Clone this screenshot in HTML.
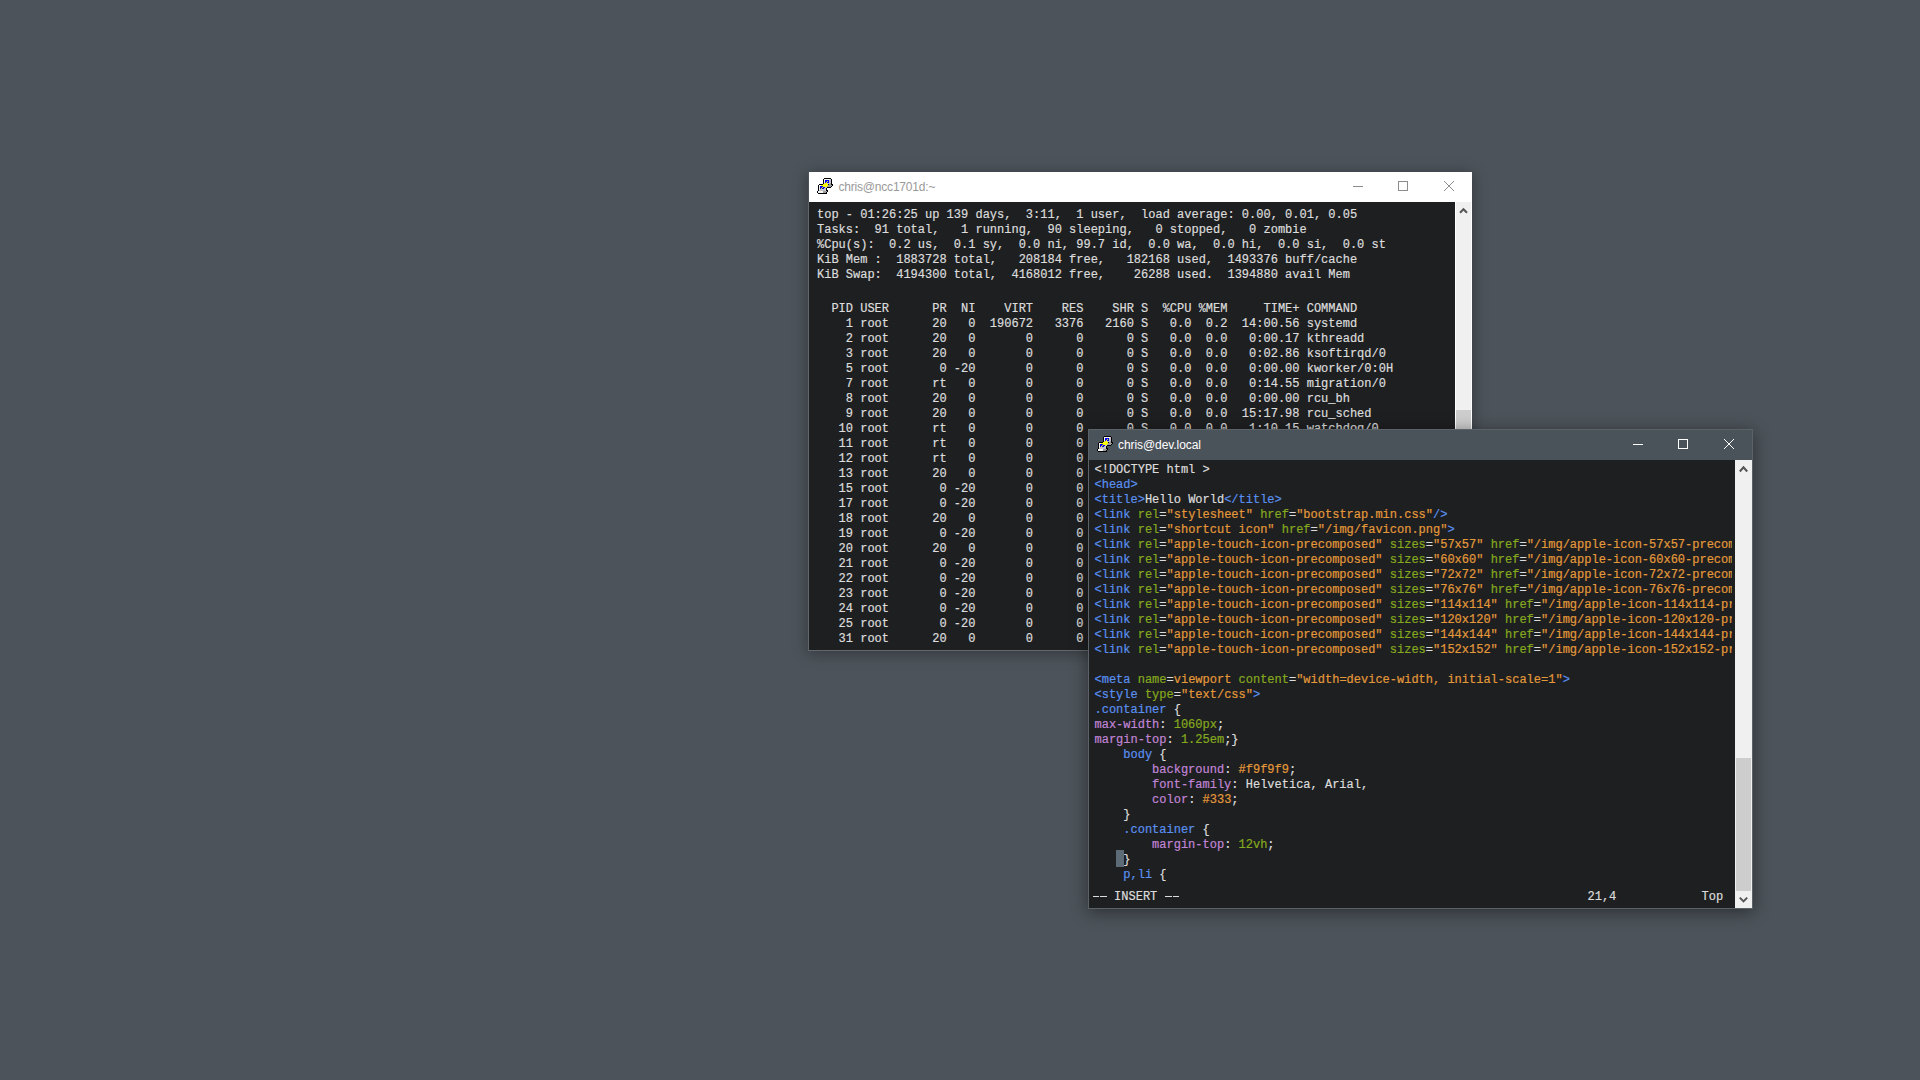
<!DOCTYPE html>
<html><head><meta charset="utf-8"><style>
html,body{margin:0;padding:0;}
body{width:1920px;height:1080px;overflow:hidden;background:#4c535a;position:relative;font-family:"Liberation Sans",sans-serif;}
.win{position:absolute;box-sizing:border-box;}
.term{position:absolute;background:#1e1f21;overflow:hidden;}
.ln{position:absolute;left:0;white-space:pre;font-family:"Liberation Mono",monospace;font-size:12px;line-height:15px;color:#dcdcdc;-webkit-text-stroke:0.2px currentColor;}
.title{position:absolute;font-size:12px;line-height:15px;white-space:pre;}
.icon{position:absolute;width:16px;height:16px;}
.sb{position:absolute;background:#f0f0f0;}
.thumb{position:absolute;background:#cdcdcd;}
</style></head><body>

<!-- window 1 -->
<div class="win" style="left:808px;top:172px;width:664px;height:479px;box-shadow:0 2px 14px rgba(0,0,0,0.35);"></div>
<div class="win" style="left:809px;top:172px;width:663px;height:478px;background:#fff;"></div>
<div class="win" style="left:808px;top:202px;width:1px;height:449px;background:#60676d;"></div>
<div class="win" style="left:808px;top:650px;width:664px;height:1px;background:#60676d;"></div>
<div class="icon" style="left:817px;top:178px"><svg width="16" height="16" viewBox="0 0 16 16" shape-rendering="crispEdges"><rect x="7" y="0" width="1" height="1" fill="#000"/><rect x="8" y="0" width="1" height="1" fill="#000"/><rect x="9" y="0" width="1" height="1" fill="#000"/><rect x="10" y="0" width="1" height="1" fill="#000"/><rect x="11" y="0" width="1" height="1" fill="#000"/><rect x="12" y="0" width="1" height="1" fill="#000"/><rect x="13" y="0" width="1" height="1" fill="#000"/><rect x="6" y="1" width="1" height="1" fill="#000"/><rect x="7" y="1" width="1" height="1" fill="#f4f4f4"/><rect x="8" y="1" width="1" height="1" fill="#f4f4f4"/><rect x="9" y="1" width="1" height="1" fill="#f4f4f4"/><rect x="10" y="1" width="1" height="1" fill="#f4f4f4"/><rect x="11" y="1" width="1" height="1" fill="#f4f4f4"/><rect x="12" y="1" width="1" height="1" fill="#f4f4f4"/><rect x="13" y="1" width="1" height="1" fill="#c4c4c4"/><rect x="14" y="1" width="1" height="1" fill="#000"/><rect x="6" y="2" width="1" height="1" fill="#000"/><rect x="7" y="2" width="1" height="1" fill="#f4f4f4"/><rect x="8" y="2" width="1" height="1" fill="#0000f8"/><rect x="9" y="2" width="1" height="1" fill="#0000f8"/><rect x="10" y="2" width="1" height="1" fill="#0000f8"/><rect x="11" y="2" width="1" height="1" fill="#0000f8"/><rect x="12" y="2" width="1" height="1" fill="#c4c4c4"/><rect x="13" y="2" width="1" height="1" fill="#c4c4c4"/><rect x="14" y="2" width="1" height="1" fill="#000"/><rect x="6" y="3" width="1" height="1" fill="#000"/><rect x="7" y="3" width="1" height="1" fill="#f4f4f4"/><rect x="8" y="3" width="1" height="1" fill="#0000f8"/><rect x="9" y="3" width="1" height="1" fill="#0000f8"/><rect x="10" y="3" width="1" height="1" fill="#ffff00"/><rect x="11" y="3" width="1" height="1" fill="#0000f8"/><rect x="12" y="3" width="1" height="1" fill="#c4c4c4"/><rect x="13" y="3" width="1" height="1" fill="#c4c4c4"/><rect x="14" y="3" width="1" height="1" fill="#000"/><rect x="6" y="4" width="1" height="1" fill="#000"/><rect x="7" y="4" width="1" height="1" fill="#f4f4f4"/><rect x="8" y="4" width="1" height="1" fill="#0000f8"/><rect x="9" y="4" width="1" height="1" fill="#ffff00"/><rect x="10" y="4" width="1" height="1" fill="#0000f8"/><rect x="11" y="4" width="1" height="1" fill="#0000f8"/><rect x="12" y="4" width="1" height="1" fill="#c4c4c4"/><rect x="13" y="4" width="1" height="1" fill="#c4c4c4"/><rect x="14" y="4" width="1" height="1" fill="#000"/><rect x="6" y="5" width="1" height="1" fill="#000"/><rect x="7" y="5" width="1" height="1" fill="#c4c4c4"/><rect x="8" y="5" width="1" height="1" fill="#ffff00"/><rect x="9" y="5" width="1" height="1" fill="#ffff00"/><rect x="10" y="5" width="1" height="1" fill="#c4c4c4"/><rect x="11" y="5" width="1" height="1" fill="#c4c4c4"/><rect x="12" y="5" width="1" height="1" fill="#c4c4c4"/><rect x="13" y="5" width="1" height="1" fill="#9c9c9c"/><rect x="14" y="5" width="1" height="1" fill="#000"/><rect x="2" y="6" width="1" height="1" fill="#000"/><rect x="3" y="6" width="1" height="1" fill="#000"/><rect x="4" y="6" width="1" height="1" fill="#000"/><rect x="5" y="6" width="1" height="1" fill="#000"/><rect x="6" y="6" width="1" height="1" fill="#ffff00"/><rect x="7" y="6" width="1" height="1" fill="#ffff00"/><rect x="8" y="6" width="1" height="1" fill="#ffff00"/><rect x="9" y="6" width="1" height="1" fill="#ffff00"/><rect x="10" y="6" width="1" height="1" fill="#ffff00"/><rect x="11" y="6" width="1" height="1" fill="#000"/><rect x="12" y="6" width="1" height="1" fill="#9c9c9c"/><rect x="13" y="6" width="1" height="1" fill="#9c9c9c"/><rect x="14" y="6" width="1" height="1" fill="#000"/><rect x="15" y="6" width="1" height="1" fill="#000"/><rect x="1" y="7" width="1" height="1" fill="#000"/><rect x="2" y="7" width="1" height="1" fill="#f4f4f4"/><rect x="3" y="7" width="1" height="1" fill="#f4f4f4"/><rect x="4" y="7" width="1" height="1" fill="#ffff00"/><rect x="5" y="7" width="1" height="1" fill="#ffff00"/><rect x="6" y="7" width="1" height="1" fill="#ffff00"/><rect x="7" y="7" width="1" height="1" fill="#ffff00"/><rect x="8" y="7" width="1" height="1" fill="#ffff00"/><rect x="9" y="7" width="1" height="1" fill="#ffff00"/><rect x="10" y="7" width="1" height="1" fill="#ffff00"/><rect x="11" y="7" width="1" height="1" fill="#9c9c9c"/><rect x="12" y="7" width="1" height="1" fill="#9c9c9c"/><rect x="13" y="7" width="1" height="1" fill="#9c9c9c"/><rect x="14" y="7" width="1" height="1" fill="#9c9c9c"/><rect x="15" y="7" width="1" height="1" fill="#000"/><rect x="1" y="8" width="1" height="1" fill="#000"/><rect x="2" y="8" width="1" height="1" fill="#f4f4f4"/><rect x="3" y="8" width="1" height="1" fill="#0000f8"/><rect x="4" y="8" width="1" height="1" fill="#0000f8"/><rect x="5" y="8" width="1" height="1" fill="#0000f8"/><rect x="6" y="8" width="1" height="1" fill="#ffff00"/><rect x="7" y="8" width="1" height="1" fill="#ffff00"/><rect x="8" y="8" width="1" height="1" fill="#ffff00"/><rect x="9" y="8" width="1" height="1" fill="#ffff00"/><rect x="10" y="8" width="1" height="1" fill="#9c9c9c"/><rect x="11" y="8" width="1" height="1" fill="#9c9c9c"/><rect x="12" y="8" width="1" height="1" fill="#9c9c9c"/><rect x="13" y="8" width="1" height="1" fill="#9c9c9c"/><rect x="14" y="8" width="1" height="1" fill="#000"/><rect x="1" y="9" width="1" height="1" fill="#000"/><rect x="2" y="9" width="1" height="1" fill="#f4f4f4"/><rect x="3" y="9" width="1" height="1" fill="#0000f8"/><rect x="4" y="9" width="1" height="1" fill="#0000f8"/><rect x="5" y="9" width="1" height="1" fill="#ffff00"/><rect x="6" y="9" width="1" height="1" fill="#0000f8"/><rect x="7" y="9" width="1" height="1" fill="#0000f8"/><rect x="8" y="9" width="1" height="1" fill="#c4c4c4"/><rect x="9" y="9" width="1" height="1" fill="#c4c4c4"/><rect x="10" y="9" width="1" height="1" fill="#000"/><rect x="11" y="9" width="1" height="1" fill="#000"/><rect x="12" y="9" width="1" height="1" fill="#000"/><rect x="13" y="9" width="1" height="1" fill="#000"/><rect x="1" y="10" width="1" height="1" fill="#000"/><rect x="2" y="10" width="1" height="1" fill="#f4f4f4"/><rect x="3" y="10" width="1" height="1" fill="#0000f8"/><rect x="4" y="10" width="1" height="1" fill="#ffff00"/><rect x="5" y="10" width="1" height="1" fill="#0000f8"/><rect x="6" y="10" width="1" height="1" fill="#0000f8"/><rect x="7" y="10" width="1" height="1" fill="#c4c4c4"/><rect x="8" y="10" width="1" height="1" fill="#c4c4c4"/><rect x="9" y="10" width="1" height="1" fill="#000"/><rect x="1" y="11" width="1" height="1" fill="#000"/><rect x="2" y="11" width="1" height="1" fill="#f4f4f4"/><rect x="3" y="11" width="1" height="1" fill="#c4c4c4"/><rect x="4" y="11" width="1" height="1" fill="#c4c4c4"/><rect x="5" y="11" width="1" height="1" fill="#c4c4c4"/><rect x="6" y="11" width="1" height="1" fill="#c4c4c4"/><rect x="7" y="11" width="1" height="1" fill="#c4c4c4"/><rect x="8" y="11" width="1" height="1" fill="#c4c4c4"/><rect x="9" y="11" width="1" height="1" fill="#000"/><rect x="1" y="12" width="1" height="1" fill="#000"/><rect x="2" y="12" width="1" height="1" fill="#c4c4c4"/><rect x="3" y="12" width="1" height="1" fill="#c4c4c4"/><rect x="4" y="12" width="1" height="1" fill="#c4c4c4"/><rect x="5" y="12" width="1" height="1" fill="#c4c4c4"/><rect x="6" y="12" width="1" height="1" fill="#c4c4c4"/><rect x="7" y="12" width="1" height="1" fill="#c4c4c4"/><rect x="8" y="12" width="1" height="1" fill="#c4c4c4"/><rect x="9" y="12" width="1" height="1" fill="#000"/><rect x="10" y="12" width="1" height="1" fill="#000"/><rect x="0" y="13" width="1" height="1" fill="#000"/><rect x="1" y="13" width="1" height="1" fill="#f4f4f4"/><rect x="2" y="13" width="1" height="1" fill="#f4f4f4"/><rect x="3" y="13" width="1" height="1" fill="#f4f4f4"/><rect x="4" y="13" width="1" height="1" fill="#f4f4f4"/><rect x="5" y="13" width="1" height="1" fill="#f4f4f4"/><rect x="6" y="13" width="1" height="1" fill="#9c9c9c"/><rect x="7" y="13" width="1" height="1" fill="#9c9c9c"/><rect x="8" y="13" width="1" height="1" fill="#9c9c9c"/><rect x="9" y="13" width="1" height="1" fill="#9c9c9c"/><rect x="10" y="13" width="1" height="1" fill="#000"/><rect x="0" y="14" width="1" height="1" fill="#000"/><rect x="1" y="14" width="1" height="1" fill="#f4f4f4"/><rect x="2" y="14" width="1" height="1" fill="#f4f4f4"/><rect x="3" y="14" width="1" height="1" fill="#f4f4f4"/><rect x="4" y="14" width="1" height="1" fill="#f4f4f4"/><rect x="5" y="14" width="1" height="1" fill="#f4f4f4"/><rect x="6" y="14" width="1" height="1" fill="#9c9c9c"/><rect x="7" y="14" width="1" height="1" fill="#9c9c9c"/><rect x="8" y="14" width="1" height="1" fill="#9c9c9c"/><rect x="9" y="14" width="1" height="1" fill="#000"/><rect x="1" y="15" width="1" height="1" fill="#000"/><rect x="2" y="15" width="1" height="1" fill="#000"/><rect x="3" y="15" width="1" height="1" fill="#000"/><rect x="4" y="15" width="1" height="1" fill="#000"/><rect x="5" y="15" width="1" height="1" fill="#000"/><rect x="6" y="15" width="1" height="1" fill="#000"/><rect x="7" y="15" width="1" height="1" fill="#000"/><rect x="8" y="15" width="1" height="1" fill="#000"/><rect x="9" y="15" width="1" height="1" fill="#000"/></svg></div>
<div class="title" style="left:838.5px;top:180px;color:#999;letter-spacing:-0.2px">chris@ncc1701d:~</div>
<svg style="position:absolute;left:1340px;top:172px" width="130" height="30">
 <line x1="13" y1="14.5" x2="23" y2="14.5" stroke="#8c8c8c" stroke-width="1"/>
 <rect x="58.5" y="9.5" width="9" height="9" fill="none" stroke="#8c8c8c" stroke-width="1"/>
 <line x1="104" y1="9" x2="114" y2="19" stroke="#8c8c8c" stroke-width="1"/>
 <line x1="114" y1="9" x2="104" y2="19" stroke="#8c8c8c" stroke-width="1"/>
</svg>
<div class="term" style="left:809px;top:202px;width:646px;height:448px;">
<div style="position:absolute;left:8px;top:-202px;">
<div class="ln" style="top:208.3px">top - 01:26:25 up 139 days,  3:11,  1 user,  load average: 0.00, 0.01, 0.05</div>
<div class="ln" style="top:223.3px">Tasks:  91 total,   1 running,  90 sleeping,   0 stopped,   0 zombie</div>
<div class="ln" style="top:238.3px">%Cpu(s):  0.2 us,  0.1 sy,  0.0 ni, 99.7 id,  0.0 wa,  0.0 hi,  0.0 si,  0.0 st</div>
<div class="ln" style="top:253.3px">KiB Mem :  1883728 total,   208184 free,   182168 used,  1493376 buff/cache</div>
<div class="ln" style="top:268.3px">KiB Swap:  4194300 total,  4168012 free,    26288 used.  1394880 avail Mem</div>
<div class="ln" style="top:302.3px">  PID USER      PR  NI    VIRT    RES    SHR S  %CPU %MEM     TIME+ COMMAND</div>
<div class="ln" style="top:317.3px">    1 root      20   0  190672   3376   2160 S   0.0  0.2  14:00.56 systemd</div>
<div class="ln" style="top:332.3px">    2 root      20   0       0      0      0 S   0.0  0.0   0:00.17 kthreadd</div>
<div class="ln" style="top:347.3px">    3 root      20   0       0      0      0 S   0.0  0.0   0:02.86 ksoftirqd/0</div>
<div class="ln" style="top:362.3px">    5 root       0 -20       0      0      0 S   0.0  0.0   0:00.00 kworker/0:0H</div>
<div class="ln" style="top:377.3px">    7 root      rt   0       0      0      0 S   0.0  0.0   0:14.55 migration/0</div>
<div class="ln" style="top:392.3px">    8 root      20   0       0      0      0 S   0.0  0.0   0:00.00 rcu_bh</div>
<div class="ln" style="top:407.3px">    9 root      20   0       0      0      0 S   0.0  0.0  15:17.98 rcu_sched</div>
<div class="ln" style="top:422.3px">   10 root      rt   0       0      0      0 S   0.0  0.0   1:10.15 watchdog/0</div>
<div class="ln" style="top:437.3px">   11 root      rt   0       0      0      0 S   0.0  0.0   1:10.15 watchdog/0</div>
<div class="ln" style="top:452.3px">   12 root      rt   0       0      0      0 S   0.0  0.0   0:00.00 khelper</div>
<div class="ln" style="top:467.3px">   13 root      20   0       0      0      0 S   0.0  0.0   0:00.00 kdevtmpfs</div>
<div class="ln" style="top:482.3px">   15 root       0 -20       0      0      0 S   0.0  0.0   0:00.00 netns</div>
<div class="ln" style="top:497.3px">   17 root       0 -20       0      0      0 S   0.0  0.0   0:00.00 perf</div>
<div class="ln" style="top:512.3px">   18 root      20   0       0      0      0 S   0.0  0.0   0:00.00 khungtaskd</div>
<div class="ln" style="top:527.3px">   19 root       0 -20       0      0      0 S   0.0  0.0   0:00.00 writeback</div>
<div class="ln" style="top:542.3px">   20 root      20   0       0      0      0 S   0.0  0.0   0:00.00 ksmd</div>
<div class="ln" style="top:557.3px">   21 root       0 -20       0      0      0 S   0.0  0.0   0:00.00 crypto</div>
<div class="ln" style="top:572.3px">   22 root       0 -20       0      0      0 S   0.0  0.0   0:00.00 kintegrityd</div>
<div class="ln" style="top:587.3px">   23 root       0 -20       0      0      0 S   0.0  0.0   0:00.00 bioset</div>
<div class="ln" style="top:602.3px">   24 root       0 -20       0      0      0 S   0.0  0.0   0:00.00 kblockd</div>
<div class="ln" style="top:617.3px">   25 root       0 -20       0      0      0 S   0.0  0.0   0:00.00 ata_sff</div>
<div class="ln" style="top:632.3px">   31 root      20   0       0      0      0 S   0.0  0.0   0:00.00 kswapd0</div>
</div>
</div>
<div class="sb" style="left:1456px;top:202px;width:15px;height:448px;"></div>
<div class="thumb" style="left:1456px;top:410px;width:15px;height:240px;"></div>
<svg style="position:absolute;left:1456px;top:202px" width="15" height="17"><polyline points="4,10.8 7.5,7.2 11,10.8" fill="none" stroke="#555" stroke-width="2"/></svg>

<!-- window 2 -->
<div class="win" style="left:1088px;top:429px;width:665px;height:480px;background:#4b535a;border:1px solid #5b6268;box-shadow:0 3px 16px rgba(0,0,0,0.45);">
</div>
<div class="icon" style="left:1097px;top:436px"><svg width="16" height="16" viewBox="0 0 16 16" shape-rendering="crispEdges"><rect x="7" y="0" width="1" height="1" fill="#000"/><rect x="8" y="0" width="1" height="1" fill="#000"/><rect x="9" y="0" width="1" height="1" fill="#000"/><rect x="10" y="0" width="1" height="1" fill="#000"/><rect x="11" y="0" width="1" height="1" fill="#000"/><rect x="12" y="0" width="1" height="1" fill="#000"/><rect x="13" y="0" width="1" height="1" fill="#000"/><rect x="6" y="1" width="1" height="1" fill="#000"/><rect x="7" y="1" width="1" height="1" fill="#f4f4f4"/><rect x="8" y="1" width="1" height="1" fill="#f4f4f4"/><rect x="9" y="1" width="1" height="1" fill="#f4f4f4"/><rect x="10" y="1" width="1" height="1" fill="#f4f4f4"/><rect x="11" y="1" width="1" height="1" fill="#f4f4f4"/><rect x="12" y="1" width="1" height="1" fill="#f4f4f4"/><rect x="13" y="1" width="1" height="1" fill="#c4c4c4"/><rect x="14" y="1" width="1" height="1" fill="#000"/><rect x="6" y="2" width="1" height="1" fill="#000"/><rect x="7" y="2" width="1" height="1" fill="#f4f4f4"/><rect x="8" y="2" width="1" height="1" fill="#0000f8"/><rect x="9" y="2" width="1" height="1" fill="#0000f8"/><rect x="10" y="2" width="1" height="1" fill="#0000f8"/><rect x="11" y="2" width="1" height="1" fill="#0000f8"/><rect x="12" y="2" width="1" height="1" fill="#c4c4c4"/><rect x="13" y="2" width="1" height="1" fill="#c4c4c4"/><rect x="14" y="2" width="1" height="1" fill="#000"/><rect x="6" y="3" width="1" height="1" fill="#000"/><rect x="7" y="3" width="1" height="1" fill="#f4f4f4"/><rect x="8" y="3" width="1" height="1" fill="#0000f8"/><rect x="9" y="3" width="1" height="1" fill="#0000f8"/><rect x="10" y="3" width="1" height="1" fill="#ffff00"/><rect x="11" y="3" width="1" height="1" fill="#0000f8"/><rect x="12" y="3" width="1" height="1" fill="#c4c4c4"/><rect x="13" y="3" width="1" height="1" fill="#c4c4c4"/><rect x="14" y="3" width="1" height="1" fill="#000"/><rect x="6" y="4" width="1" height="1" fill="#000"/><rect x="7" y="4" width="1" height="1" fill="#f4f4f4"/><rect x="8" y="4" width="1" height="1" fill="#0000f8"/><rect x="9" y="4" width="1" height="1" fill="#ffff00"/><rect x="10" y="4" width="1" height="1" fill="#0000f8"/><rect x="11" y="4" width="1" height="1" fill="#0000f8"/><rect x="12" y="4" width="1" height="1" fill="#c4c4c4"/><rect x="13" y="4" width="1" height="1" fill="#c4c4c4"/><rect x="14" y="4" width="1" height="1" fill="#000"/><rect x="6" y="5" width="1" height="1" fill="#000"/><rect x="7" y="5" width="1" height="1" fill="#c4c4c4"/><rect x="8" y="5" width="1" height="1" fill="#ffff00"/><rect x="9" y="5" width="1" height="1" fill="#ffff00"/><rect x="10" y="5" width="1" height="1" fill="#c4c4c4"/><rect x="11" y="5" width="1" height="1" fill="#c4c4c4"/><rect x="12" y="5" width="1" height="1" fill="#c4c4c4"/><rect x="13" y="5" width="1" height="1" fill="#9c9c9c"/><rect x="14" y="5" width="1" height="1" fill="#000"/><rect x="2" y="6" width="1" height="1" fill="#000"/><rect x="3" y="6" width="1" height="1" fill="#000"/><rect x="4" y="6" width="1" height="1" fill="#000"/><rect x="5" y="6" width="1" height="1" fill="#000"/><rect x="6" y="6" width="1" height="1" fill="#ffff00"/><rect x="7" y="6" width="1" height="1" fill="#ffff00"/><rect x="8" y="6" width="1" height="1" fill="#ffff00"/><rect x="9" y="6" width="1" height="1" fill="#ffff00"/><rect x="10" y="6" width="1" height="1" fill="#ffff00"/><rect x="11" y="6" width="1" height="1" fill="#000"/><rect x="12" y="6" width="1" height="1" fill="#9c9c9c"/><rect x="13" y="6" width="1" height="1" fill="#9c9c9c"/><rect x="14" y="6" width="1" height="1" fill="#000"/><rect x="15" y="6" width="1" height="1" fill="#000"/><rect x="1" y="7" width="1" height="1" fill="#000"/><rect x="2" y="7" width="1" height="1" fill="#f4f4f4"/><rect x="3" y="7" width="1" height="1" fill="#f4f4f4"/><rect x="4" y="7" width="1" height="1" fill="#ffff00"/><rect x="5" y="7" width="1" height="1" fill="#ffff00"/><rect x="6" y="7" width="1" height="1" fill="#ffff00"/><rect x="7" y="7" width="1" height="1" fill="#ffff00"/><rect x="8" y="7" width="1" height="1" fill="#ffff00"/><rect x="9" y="7" width="1" height="1" fill="#ffff00"/><rect x="10" y="7" width="1" height="1" fill="#ffff00"/><rect x="11" y="7" width="1" height="1" fill="#9c9c9c"/><rect x="12" y="7" width="1" height="1" fill="#9c9c9c"/><rect x="13" y="7" width="1" height="1" fill="#9c9c9c"/><rect x="14" y="7" width="1" height="1" fill="#9c9c9c"/><rect x="15" y="7" width="1" height="1" fill="#000"/><rect x="1" y="8" width="1" height="1" fill="#000"/><rect x="2" y="8" width="1" height="1" fill="#f4f4f4"/><rect x="3" y="8" width="1" height="1" fill="#0000f8"/><rect x="4" y="8" width="1" height="1" fill="#0000f8"/><rect x="5" y="8" width="1" height="1" fill="#0000f8"/><rect x="6" y="8" width="1" height="1" fill="#ffff00"/><rect x="7" y="8" width="1" height="1" fill="#ffff00"/><rect x="8" y="8" width="1" height="1" fill="#ffff00"/><rect x="9" y="8" width="1" height="1" fill="#ffff00"/><rect x="10" y="8" width="1" height="1" fill="#9c9c9c"/><rect x="11" y="8" width="1" height="1" fill="#9c9c9c"/><rect x="12" y="8" width="1" height="1" fill="#9c9c9c"/><rect x="13" y="8" width="1" height="1" fill="#9c9c9c"/><rect x="14" y="8" width="1" height="1" fill="#000"/><rect x="1" y="9" width="1" height="1" fill="#000"/><rect x="2" y="9" width="1" height="1" fill="#f4f4f4"/><rect x="3" y="9" width="1" height="1" fill="#0000f8"/><rect x="4" y="9" width="1" height="1" fill="#0000f8"/><rect x="5" y="9" width="1" height="1" fill="#ffff00"/><rect x="6" y="9" width="1" height="1" fill="#0000f8"/><rect x="7" y="9" width="1" height="1" fill="#0000f8"/><rect x="8" y="9" width="1" height="1" fill="#c4c4c4"/><rect x="9" y="9" width="1" height="1" fill="#c4c4c4"/><rect x="10" y="9" width="1" height="1" fill="#000"/><rect x="11" y="9" width="1" height="1" fill="#000"/><rect x="12" y="9" width="1" height="1" fill="#000"/><rect x="13" y="9" width="1" height="1" fill="#000"/><rect x="1" y="10" width="1" height="1" fill="#000"/><rect x="2" y="10" width="1" height="1" fill="#f4f4f4"/><rect x="3" y="10" width="1" height="1" fill="#0000f8"/><rect x="4" y="10" width="1" height="1" fill="#ffff00"/><rect x="5" y="10" width="1" height="1" fill="#0000f8"/><rect x="6" y="10" width="1" height="1" fill="#0000f8"/><rect x="7" y="10" width="1" height="1" fill="#c4c4c4"/><rect x="8" y="10" width="1" height="1" fill="#c4c4c4"/><rect x="9" y="10" width="1" height="1" fill="#000"/><rect x="1" y="11" width="1" height="1" fill="#000"/><rect x="2" y="11" width="1" height="1" fill="#f4f4f4"/><rect x="3" y="11" width="1" height="1" fill="#c4c4c4"/><rect x="4" y="11" width="1" height="1" fill="#c4c4c4"/><rect x="5" y="11" width="1" height="1" fill="#c4c4c4"/><rect x="6" y="11" width="1" height="1" fill="#c4c4c4"/><rect x="7" y="11" width="1" height="1" fill="#c4c4c4"/><rect x="8" y="11" width="1" height="1" fill="#c4c4c4"/><rect x="9" y="11" width="1" height="1" fill="#000"/><rect x="1" y="12" width="1" height="1" fill="#000"/><rect x="2" y="12" width="1" height="1" fill="#c4c4c4"/><rect x="3" y="12" width="1" height="1" fill="#c4c4c4"/><rect x="4" y="12" width="1" height="1" fill="#c4c4c4"/><rect x="5" y="12" width="1" height="1" fill="#c4c4c4"/><rect x="6" y="12" width="1" height="1" fill="#c4c4c4"/><rect x="7" y="12" width="1" height="1" fill="#c4c4c4"/><rect x="8" y="12" width="1" height="1" fill="#c4c4c4"/><rect x="9" y="12" width="1" height="1" fill="#000"/><rect x="10" y="12" width="1" height="1" fill="#000"/><rect x="0" y="13" width="1" height="1" fill="#000"/><rect x="1" y="13" width="1" height="1" fill="#f4f4f4"/><rect x="2" y="13" width="1" height="1" fill="#f4f4f4"/><rect x="3" y="13" width="1" height="1" fill="#f4f4f4"/><rect x="4" y="13" width="1" height="1" fill="#f4f4f4"/><rect x="5" y="13" width="1" height="1" fill="#f4f4f4"/><rect x="6" y="13" width="1" height="1" fill="#9c9c9c"/><rect x="7" y="13" width="1" height="1" fill="#9c9c9c"/><rect x="8" y="13" width="1" height="1" fill="#9c9c9c"/><rect x="9" y="13" width="1" height="1" fill="#9c9c9c"/><rect x="10" y="13" width="1" height="1" fill="#000"/><rect x="0" y="14" width="1" height="1" fill="#000"/><rect x="1" y="14" width="1" height="1" fill="#f4f4f4"/><rect x="2" y="14" width="1" height="1" fill="#f4f4f4"/><rect x="3" y="14" width="1" height="1" fill="#f4f4f4"/><rect x="4" y="14" width="1" height="1" fill="#f4f4f4"/><rect x="5" y="14" width="1" height="1" fill="#f4f4f4"/><rect x="6" y="14" width="1" height="1" fill="#9c9c9c"/><rect x="7" y="14" width="1" height="1" fill="#9c9c9c"/><rect x="8" y="14" width="1" height="1" fill="#9c9c9c"/><rect x="9" y="14" width="1" height="1" fill="#000"/><rect x="1" y="15" width="1" height="1" fill="#000"/><rect x="2" y="15" width="1" height="1" fill="#000"/><rect x="3" y="15" width="1" height="1" fill="#000"/><rect x="4" y="15" width="1" height="1" fill="#000"/><rect x="5" y="15" width="1" height="1" fill="#000"/><rect x="6" y="15" width="1" height="1" fill="#000"/><rect x="7" y="15" width="1" height="1" fill="#000"/><rect x="8" y="15" width="1" height="1" fill="#000"/><rect x="9" y="15" width="1" height="1" fill="#000"/></svg></div>
<div class="title" style="left:1118px;top:438px;color:#fff;letter-spacing:-0.07px">chris@dev.local</div>
<svg style="position:absolute;left:1620px;top:429px" width="130" height="31">
 <line x1="13" y1="15.5" x2="23" y2="15.5" stroke="#fff" stroke-width="1"/>
 <rect x="58.5" y="10.5" width="9" height="9" fill="none" stroke="#fff" stroke-width="1"/>
 <line x1="104" y1="10" x2="114" y2="20" stroke="#fff" stroke-width="1"/>
 <line x1="114" y1="10" x2="104" y2="20" stroke="#fff" stroke-width="1"/>
</svg>
<div class="term" style="left:1089px;top:460px;width:646px;height:448px;">
<div style="position:absolute;left:5.5px;top:-460px;width:2000px;">
<div class="ln" style="top:463.3px">&lt;!DOCTYPE html &gt;</div>
<div class="ln" style="top:478.3px"><span style="color:#5a90f0">&lt;head&gt;</span></div>
<div class="ln" style="top:493.3px"><span style="color:#5a90f0">&lt;title&gt;</span>Hello World<span style="color:#5a90f0">&lt;/title&gt;</span></div>
<div class="ln" style="top:508.3px"><span style="color:#5a90f0">&lt;link </span><span style="color:#85a91e">rel</span>=<span style="color:#e3993a">"stylesheet"</span> <span style="color:#85a91e">href</span>=<span style="color:#e3993a">"bootstrap.min.css"</span><span style="color:#5a90f0">/&gt;</span></div>
<div class="ln" style="top:523.3px"><span style="color:#5a90f0">&lt;link </span><span style="color:#85a91e">rel</span>=<span style="color:#e3993a">"shortcut icon"</span> <span style="color:#85a91e">href</span>=<span style="color:#e3993a">"/img/favicon.png"</span><span style="color:#5a90f0">&gt;</span></div>
<div class="ln" style="top:538.3px"><span style="color:#5a90f0">&lt;link </span><span style="color:#85a91e">rel</span>=<span style="color:#e3993a">"apple-touch-icon-precomposed"</span> <span style="color:#85a91e">sizes</span>=<span style="color:#e3993a">"57x57"</span> <span style="color:#85a91e">href</span>=<span style="color:#e3993a">"/img/apple-icon-57x57-precomposed.png"</span><span style="color:#5a90f0">&gt;</span></div>
<div class="ln" style="top:553.3px"><span style="color:#5a90f0">&lt;link </span><span style="color:#85a91e">rel</span>=<span style="color:#e3993a">"apple-touch-icon-precomposed"</span> <span style="color:#85a91e">sizes</span>=<span style="color:#e3993a">"60x60"</span> <span style="color:#85a91e">href</span>=<span style="color:#e3993a">"/img/apple-icon-60x60-precomposed.png"</span><span style="color:#5a90f0">&gt;</span></div>
<div class="ln" style="top:568.3px"><span style="color:#5a90f0">&lt;link </span><span style="color:#85a91e">rel</span>=<span style="color:#e3993a">"apple-touch-icon-precomposed"</span> <span style="color:#85a91e">sizes</span>=<span style="color:#e3993a">"72x72"</span> <span style="color:#85a91e">href</span>=<span style="color:#e3993a">"/img/apple-icon-72x72-precomposed.png"</span><span style="color:#5a90f0">&gt;</span></div>
<div class="ln" style="top:583.3px"><span style="color:#5a90f0">&lt;link </span><span style="color:#85a91e">rel</span>=<span style="color:#e3993a">"apple-touch-icon-precomposed"</span> <span style="color:#85a91e">sizes</span>=<span style="color:#e3993a">"76x76"</span> <span style="color:#85a91e">href</span>=<span style="color:#e3993a">"/img/apple-icon-76x76-precomposed.png"</span><span style="color:#5a90f0">&gt;</span></div>
<div class="ln" style="top:598.3px"><span style="color:#5a90f0">&lt;link </span><span style="color:#85a91e">rel</span>=<span style="color:#e3993a">"apple-touch-icon-precomposed"</span> <span style="color:#85a91e">sizes</span>=<span style="color:#e3993a">"114x114"</span> <span style="color:#85a91e">href</span>=<span style="color:#e3993a">"/img/apple-icon-114x114-precomposed.png"</span><span style="color:#5a90f0">&gt;</span></div>
<div class="ln" style="top:613.3px"><span style="color:#5a90f0">&lt;link </span><span style="color:#85a91e">rel</span>=<span style="color:#e3993a">"apple-touch-icon-precomposed"</span> <span style="color:#85a91e">sizes</span>=<span style="color:#e3993a">"120x120"</span> <span style="color:#85a91e">href</span>=<span style="color:#e3993a">"/img/apple-icon-120x120-precomposed.png"</span><span style="color:#5a90f0">&gt;</span></div>
<div class="ln" style="top:628.3px"><span style="color:#5a90f0">&lt;link </span><span style="color:#85a91e">rel</span>=<span style="color:#e3993a">"apple-touch-icon-precomposed"</span> <span style="color:#85a91e">sizes</span>=<span style="color:#e3993a">"144x144"</span> <span style="color:#85a91e">href</span>=<span style="color:#e3993a">"/img/apple-icon-144x144-precomposed.png"</span><span style="color:#5a90f0">&gt;</span></div>
<div class="ln" style="top:643.3px"><span style="color:#5a90f0">&lt;link </span><span style="color:#85a91e">rel</span>=<span style="color:#e3993a">"apple-touch-icon-precomposed"</span> <span style="color:#85a91e">sizes</span>=<span style="color:#e3993a">"152x152"</span> <span style="color:#85a91e">href</span>=<span style="color:#e3993a">"/img/apple-icon-152x152-precomposed.png"</span><span style="color:#5a90f0">&gt;</span></div>
<div class="ln" style="top:658.3px"></div>
<div class="ln" style="top:673.3px"><span style="color:#5a90f0">&lt;meta </span><span style="color:#85a91e">name</span>=<span style="color:#e3993a">viewport</span> <span style="color:#85a91e">content</span>=<span style="color:#e3993a">"width=device-width, initial-scale=1"</span><span style="color:#5a90f0">&gt;</span></div>
<div class="ln" style="top:688.3px"><span style="color:#5a90f0">&lt;style </span><span style="color:#85a91e">type</span>=<span style="color:#e3993a">"text/css"</span><span style="color:#5a90f0">&gt;</span></div>
<div class="ln" style="top:703.3px"><span style="color:#5a90f0">.container</span> {</div>
<div class="ln" style="top:718.3px"><span style="color:#c185d6">max-width</span>: <span style="color:#85a91e">1060px</span>;</div>
<div class="ln" style="top:733.3px"><span style="color:#c185d6">margin-top</span>: <span style="color:#85a91e">1.25em</span>;}</div>
<div class="ln" style="top:748.3px">    <span style="color:#5a90f0">body</span> {</div>
<div class="ln" style="top:763.3px">        <span style="color:#c185d6">background</span>: <span style="color:#e3993a">#f9f9f9</span>;</div>
<div class="ln" style="top:778.3px">        <span style="color:#c185d6">font-family</span>: Helvetica, Arial,</div>
<div class="ln" style="top:793.3px">        <span style="color:#c185d6">color</span>: <span style="color:#e3993a">#333</span>;</div>
<div class="ln" style="top:808.3px">    }</div>
<div class="ln" style="top:823.3px">    <span style="color:#5a90f0">.container</span> {</div>
<div class="ln" style="top:838.3px">        <span style="color:#c185d6">margin-top</span>: <span style="color:#85a91e">12vh</span>;</div>
<div class="ln" style="top:853.3px">    }</div>
<div class="ln" style="top:868.3px">    <span style="color:#5a90f0">p,li</span> {</div>
<div style="position:absolute;left:21px;top:850px;width:8px;height:17px;background:#5c6b75;"></div>

<div class="ln" style="top:890.3px;left:-2px">   INSERT</div>
<div style="position:absolute;left:-2px;top:895.5px;width:6.5px;height:1.6px;background:#dcdcdc"></div><div style="position:absolute;left:5.5px;top:895.5px;width:6.5px;height:1.6px;background:#dcdcdc"></div><div style="position:absolute;left:70.5px;top:895.5px;width:6.5px;height:1.6px;background:#dcdcdc"></div><div style="position:absolute;left:78px;top:895.5px;width:6.5px;height:1.6px;background:#dcdcdc"></div>
<div class="ln" style="top:890.3px;left:493px">21,4</div>
<div class="ln" style="top:890.3px;left:607px">Top</div>
</div>
</div>
<div style="position:absolute;left:1732px;top:460px;width:3px;height:448px;background:#1e1f21;"></div>
<div class="sb" style="left:1735px;top:460px;width:17px;height:448px;"></div>
<div class="thumb" style="left:1736px;top:758px;width:15px;height:133px;"></div>
<svg style="position:absolute;left:1735px;top:460px" width="17" height="17"><polyline points="4.8,11.5 8.5,7.3 12.2,11.5" fill="none" stroke="#555" stroke-width="2"/></svg>
<svg style="position:absolute;left:1735px;top:891px" width="17" height="17"><polyline points="4.8,6.6 8.5,10.4 12.2,6.6" fill="none" stroke="#555" stroke-width="2"/></svg>

</body></html>
